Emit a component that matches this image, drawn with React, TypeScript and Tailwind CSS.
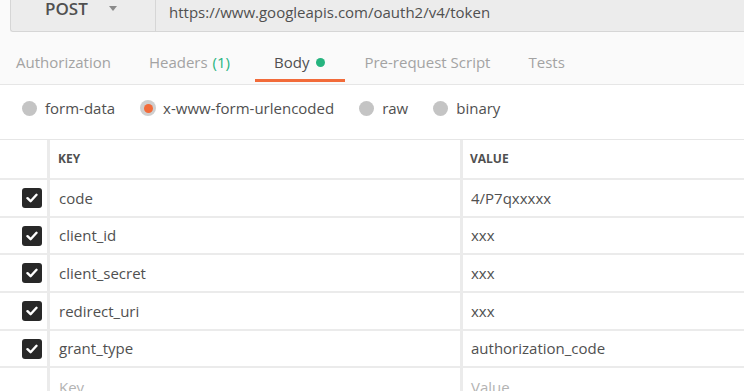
import React from 'react';

const rows = [
  { key: 'code', value: '4/P7qxxxxx' },
  { key: 'client_id', value: 'xxx' },
  { key: 'client_secret', value: 'xxx' },
  { key: 'redirect_uri', value: 'xxx' },
  { key: 'grant_type', value: 'authorization_code' },
];

const tabs = [
  { label: 'Authorization' },
  { label: 'Headers', count: '(1)' },
  { label: 'Body', active: true },
  { label: 'Pre-request Script' },
  { label: 'Tests' },
];

const radios = [
  { label: 'form-data' },
  { label: 'x-www-form-urlencoded', checked: true },
  { label: 'raw' },
  { label: 'binary' },
];

const Check = () => (
  <div className="w-[20px] h-[20px] rounded-[3px] bg-[#282828] flex items-center justify-center">
    <svg width="12" height="10" viewBox="0 0 12 10" fill="none">
      <path d="M1.5 5.2 L4.6 8.2 L10.5 1.8" stroke="#fff" strokeWidth="2.4" strokeLinecap="round" strokeLinejoin="round" />
    </svg>
  </div>
);

export default function App() {
  return (
    <div
      className="w-[744px] h-[391px] overflow-hidden bg-white text-[#505050]"
      style={{ fontFamily: '"Open Sans", "Noto Sans", sans-serif' }}
    >
      {/* request bar */}
      <div className="flex h-[32px] bg-[#fafafa] pl-[10px]">
        <div className="w-[145px] h-full bg-[#ececec] border-l border-b border-[#d6d6d6] rounded-bl-[3px] flex items-start pl-[34px]">
          <span className="text-[17px] font-semibold leading-[17px] text-[#505050]">POST</span>
          <svg className="ml-[21px] mt-[6px]" width="8" height="5" viewBox="0 0 8 5">
            <path d="M0 0 L8 0 L4 5 Z" fill="#8a8a8a" />
          </svg>
        </div>
        <div className="flex-1 h-full bg-[#ececec] border-l border-b border-[#d6d6d6] pl-[13px]">
          <span className="text-[15px] leading-[17px] text-[#505050]">https://www.googleapis.com/oauth2/v4/token</span>
        </div>
      </div>

      {/* tabs */}
      <div className="h-[53px] bg-[#fafafa] border-b border-[#e6e6e6] flex items-start">
        {tabs.map((t, i) => (
          <div
            key={t.label}
            className={`h-[50px] pt-[20px] pb-[7px] flex items-center text-[15px] leading-[20px] ${
              i === 0 ? 'pl-[16px] pr-[19px]' : 'px-[19px]'
            } ${t.active ? 'ml-[6px] pr-[20px] border-b-[3px] border-[#f26b3a] text-[#505050]' : 'border-b-[3px] border-transparent text-[#a3a3a3]'}`}
          >
            <span>{t.label}</span>
            {t.count && <span className="ml-[5px] text-[#26b47f]">{t.count}</span>}
            {t.active && <span className="ml-[7px] w-[9px] h-[9px] rounded-full bg-[#26b47f]" />}
          </div>
        ))}
      </div>

      {/* body type radios */}
      <div className="h-[55px] border-b border-[#e6e6e6] flex items-start pt-[13px] pl-[22px] gap-[25px]">
        {radios.map((r) => (
          <div key={r.label} className="flex items-center text-[15px] leading-[20px] text-[#505050]">
            {r.checked ? (
              <span className="w-[16px] h-[16px] rounded-full bg-[#cfcfcf] flex items-center justify-center">
                <span className="w-[9px] h-[9px] rounded-full bg-[#f26b3a]" />
              </span>
            ) : (
              <span className="w-[15px] h-[15px] rounded-full bg-[#c4c4c4]" />
            )}
            <span className={r.checked ? 'ml-[7px]' : 'ml-[8px]'}>{r.label}</span>
          </div>
        ))}
      </div>

      {/* table */}
      <div className="flex flex-col">
        <div className="flex h-[40px] border-b-2 border-[#ebebeb]">
          <div className="w-[50px] border-r-[3px] border-[#ebebeb]" />
          <div className="w-[413px] border-r-[3px] border-[#ebebeb] pl-[8px] flex items-center text-[12px] font-bold text-[#505050]">KEY</div>
          <div className="flex-1 pl-[7px] flex items-center text-[12px] font-bold text-[#505050]">VALUE</div>
        </div>
        {rows.map((r) => (
          <div key={r.key} className="flex h-[37.7px] border-b-2 border-[#ebebeb]">
            <div className="w-[50px] border-r-[3px] border-[#ebebeb] flex items-center justify-end pr-[5px]">
              <Check />
            </div>
            <div className="w-[413px] border-r-[3px] border-[#ebebeb] pl-[9px] flex items-center text-[15px] text-[#505050]">{r.key}</div>
            <div className="flex-1 pl-[8px] flex items-center text-[15px] text-[#505050]">{r.value}</div>
          </div>
        ))}
        <div className="flex h-[37.7px]">
          <div className="w-[50px] border-r-[3px] border-[#ebebeb]" />
          <div className="w-[413px] border-r-[3px] border-[#ebebeb] pl-[9px] flex items-center text-[15px] text-[#b3b3b3]">Key</div>
          <div className="flex-1 pl-[8px] flex items-center text-[15px] text-[#b3b3b3]">Value</div>
        </div>
      </div>
    </div>
  );
}
